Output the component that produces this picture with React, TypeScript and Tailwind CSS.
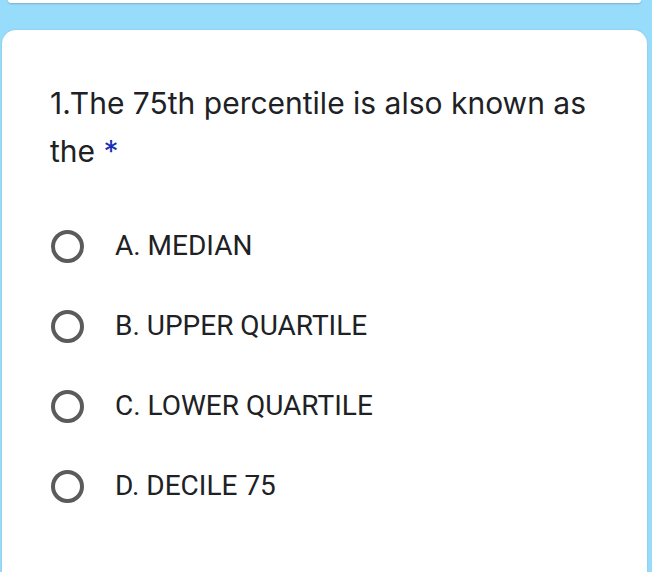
const options = ["A. MEDIAN", "B. UPPER QUARTILE", "C. LOWER QUARTILE", "D. DECILE 75"];

export default function App() {
  return (
    <div className="w-[652px] h-[572px] overflow-hidden bg-[#97dcfb] pl-[2px] pr-[5px]">
      <div className="mx-[6px] h-[3px] rounded-b-[10px] bg-white shadow-[0_1px_2px_rgba(0,0,0,0.2)]" />
      <div className="mt-[27px] h-[560px] rounded-[14px] bg-white pl-[48px] pt-[49px] shadow-[0_0_2px_rgba(0,0,0,0.15)]">
        <p
          className="w-[550px] text-[30px] leading-[48px] text-[#202124]"
          style={{ fontFamily: "Inter, Roboto, sans-serif" }}
        >
          1.The 75th percentile is also known as the{" "}
          <span className="text-[#1a2fb3]">*</span>
        </p>
        <div className="mt-[55px] flex flex-col gap-[48px]" style={{ fontFamily: "Roboto, sans-serif" }}>
          {options.map((o) => (
            <div key={o} className="flex items-center h-[32px]">
              <div className="ml-[1px] h-[33px] w-[33px] rounded-full border-[4px] border-[#5b5b5b]" />
              <span className="ml-[31px] text-[28px] text-[#202124]">{o}</span>
            </div>
          ))}
        </div>
      </div>
    </div>
  );
}
